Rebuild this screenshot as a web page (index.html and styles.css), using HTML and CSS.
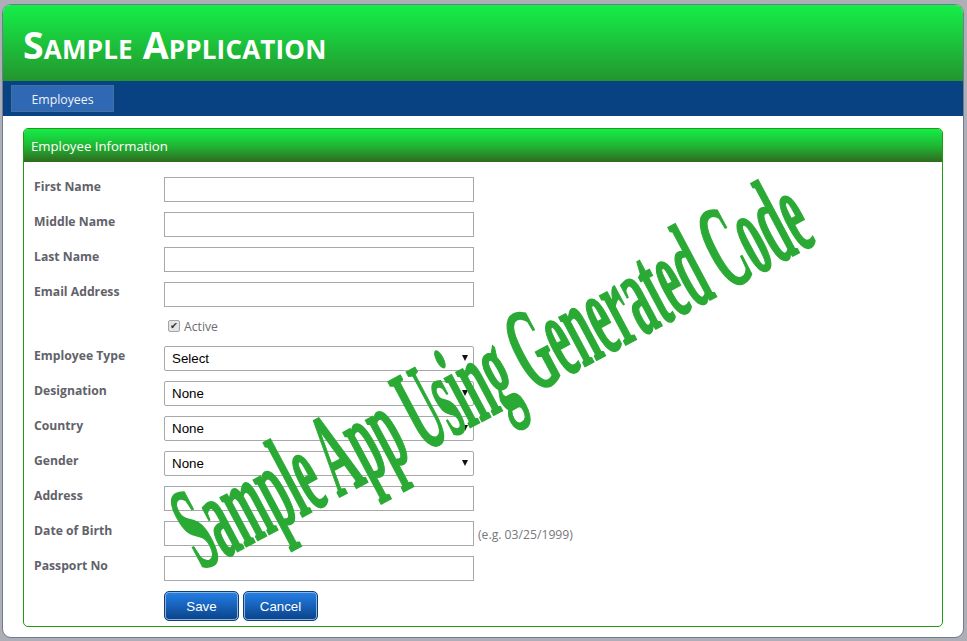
FILE: index.html
```html
<!DOCTYPE html>
<html lang="en">
<head>
<meta charset="utf-8">
<title>Sample Application</title>
<link rel="stylesheet" href="styles.css">
</head>
<body>
<div class="window">
  <header class="app-header"><h1 class="app-title">Sample Application</h1></header>
  <nav class="nav"><a class="nav-item">Employees</a></nav>
  <main class="content">
    <section class="panel">
      <h2 class="panel-title">Employee Information</h2>
      <form class="form">
        <div class="row"><label class="lbl">First Name</label><input class="field" type="text"></div>
        <div class="row"><label class="lbl">Middle Name</label><input class="field" type="text"></div>
        <div class="row"><label class="lbl">Last Name</label><input class="field" type="text"></div>
        <div class="row"><label class="lbl">Email Address</label><input class="field" type="text"></div>
        <div class="row row-check"><span class="lbl"></span><label class="check"><input class="checkbox" type="checkbox" checked>Active</label></div>
        <div class="row"><label class="lbl">Employee Type</label><div class="field select">Select<span class="arrow"></span></div></div>
        <div class="row"><label class="lbl">Designation</label><div class="field select">None<span class="arrow"></span></div></div>
        <div class="row"><label class="lbl">Country</label><div class="field select">None<span class="arrow"></span></div></div>
        <div class="row"><label class="lbl">Gender</label><div class="field select">None<span class="arrow"></span></div></div>
        <div class="row"><label class="lbl">Address</label><input class="field" type="text"></div>
        <div class="row"><label class="lbl">Date of Birth</label><input class="field" type="text"><span class="hint">(e.g. 03/25/1999)</span></div>
        <div class="row"><label class="lbl">Passport No</label><input class="field" type="text"></div>
        <div class="row row-btn"><span class="lbl"></span><button class="btn" type="button">Save</button><button class="btn" type="button">Cancel</button></div>
      </form>
    </section>
  </main>
  <div class="watermark">Sample App Using Generated Code</div>
</div>
</body>
</html>
```
FILE: styles.css
```css
* { box-sizing: border-box; }
html, body { margin: 0; height: 100%; }
body { background: #aeaeb6; padding: 4px 3px 3px 2px; font-family: "Open Sans", "Noto Sans", sans-serif; overflow: hidden; }
.window { position: relative; height: 634px; background: #fff; border: 1px solid #6d7d8f; border-radius: 9px; overflow: hidden; }
.app-header { height: 76px; background: linear-gradient(#14ee48 0%, #17e244 15%, #23952e 100%); padding: 16px 0 0 20px; }
.app-title { margin: 0; color: #fff; font-family: "Open Sans", sans-serif; font-variant: small-caps; font-weight: 700; font-size: 37.5px; letter-spacing: .18px; line-height: 48px; }
.nav { height: 35px; background: #094283; padding: 4px 0 0 8px; }
.nav-item { display: block; width: 103px; height: 27px; background: #2f69b3; border: 1px solid #44709f; color: #f0f2f8; font-size: 12.3px; line-height: 27px; text-align: center; }
.content { padding: 12px 20px 0; }
.panel { height: 499px; border: 1px solid #1f9a12; border-radius: 5px; overflow: hidden; }
.panel-title { margin: 0; height: 33px; background: linear-gradient(#14ee48 0%, #1fb834 50%, #2f6a1f 100%); color: #fff; font-size: 13.2px; font-weight: 400; line-height: 35px; padding-left: 7px; }
.form { padding: 15px 0 0 10px; }
.row { display: flex; align-items: flex-start; height: 25px; margin-bottom: 10px; }
.lbl { width: 130px; flex: none; color: #62626a; font-size: 12.2px; font-weight: 700; line-height: 20px; }
.field { width: 310px; height: 25px; background: #fff; border: 1px solid #a8a8a8; padding: 0 7px; margin: 0; font-family: "Liberation Sans", sans-serif; font-size: 13.33px; color: #000; line-height: 24px; outline: 0; }
.select { position: relative; border-radius: 2px; }
.arrow { position: absolute; right: 5px; top: 8px; width: 0; height: 0; border-left: 3px solid transparent; border-right: 3px solid transparent; border-top: 6px solid #111; }
.row-check { height: 18px; margin: 2px 0 11px; }
.check { display: flex; align-items: center; height: 18px; color: #6c6c72; font-size: 12.2px; padding-left: 4px; }
.checkbox { appearance: none; position: relative; width: 12px; height: 12px; margin: 0 4px 0 0; background: #e4e4e4; border: 1px solid #a5a5a5; border-radius: 2px; }
.checkbox::before { content: "\2714"; position: absolute; left: 0; top: 0; width: 10px; font-family: "DejaVu Sans", sans-serif; font-size: 9.5px; line-height: 10px; text-align: center; color: #333; }
.hint { color: #77777d; font-size: 12.2px; line-height: 27px; margin-left: 4px; }
.row-btn { height: 30px; margin: 0; }
.btn { width: 75px; height: 30px; margin-right: 4px; border: 1px solid #0d3f78; border-radius: 5px; box-shadow: inset 0 0 0 1px #8fb4dc; background: linear-gradient(#2480e8, #0a4288); color: #fff; font-family: "Liberation Sans", sans-serif; font-size: 13.33px; padding: 0; }
.watermark { position: absolute; left: -612px; top: 366px; width: 2200px; height: 0; text-align: center; white-space: nowrap; color: #2aaa35; -webkit-text-stroke: 2px #2aaa35; font-family: "Liberation Serif", serif; font-weight: 700; font-size: 120px; line-height: 0; transform: rotate(-28deg) scaleX(.385); }
```
